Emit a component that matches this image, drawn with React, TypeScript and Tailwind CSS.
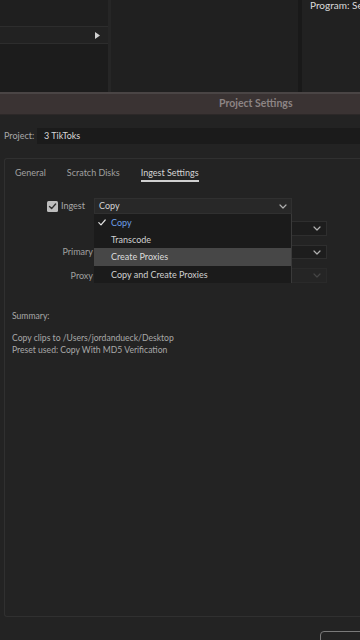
import React from "react";

function Chevron({ color = "#b0b0b0" }: { color?: string }) {
  return (
    <svg width="8" height="5" viewBox="0 0 8 5" fill="none">
      <path d="M1 1 L4 4 L7 1" stroke={color} strokeWidth="1.2" strokeLinecap="round" strokeLinejoin="round" />
    </svg>
  );
}

export default function App() {
  return (
    <div className="w-[360px] h-[640px] overflow-hidden bg-[#1f1f1f] flex flex-col font-['Lato',sans-serif] relative">
      {/* Top workspace panels */}
      <div className="h-[92px] flex shrink-0">
        <div className="w-[108px] flex flex-col">
          <div className="h-[26px] bg-[#1f1f1f]" />
          <div className="h-[18px] border-t border-b border-[#2d2d2d] bg-[#222222] flex items-center justify-end pr-[8px]">
            <svg width="5" height="7" viewBox="0 0 5 7">
              <path d="M0 0 L5 3.5 L0 7 Z" fill="#d0d0d0" />
            </svg>
          </div>
          <div className="flex-1 bg-[#1c1c1c]" />
        </div>
        <div className="w-[3px] bg-[#262626]" />
        <div className="flex-1 bg-[#202020]" />
        <div className="w-[4px] bg-[#191919]" />
        <div className="w-[58px] bg-[#212121] pl-[8px] text-[10px] leading-[11px] text-[#dcdcdc] whitespace-nowrap overflow-hidden">
          Program: Sequence 01
        </div>
      </div>
      <div className="h-[2px] bg-[#4a4545] shrink-0" />
      {/* Title bar */}
      <div className="h-[21px] bg-[#3a3333] shrink-0 flex items-center pl-[219px] text-[10.5px] font-bold text-[#8c8484] whitespace-nowrap border-b border-[#2c2828]">
        Project Settings
      </div>
      {/* Body */}
      <div className="flex-1 bg-[#232323] flex flex-col">
        <div className="flex items-center mt-[13px] h-[16px]">
          <div className="pl-[4px] w-[37px] text-[9px] text-[#a8a8a8]">Project:</div>
          <div className="flex-1 h-[16px] bg-[#1b1b1b] flex items-center pl-[7px] text-[9px] text-[#d8d8d8]">3 TikToks</div>
        </div>

        {/* Tab panel */}
        <div className="mt-[14px] ml-[4px] h-[459px] border border-r-0 border-[#303030] rounded-l-[3px] flex flex-col">
          <div className="flex gap-[21px] pl-[10px] pt-[8px] text-[9px] leading-[12px]">
            <span className="text-[#a0a0a0]">General</span>
            <span className="text-[#a0a0a0]">Scratch Disks</span>
            <span className="text-[#d4d4d4] border-b-2 border-[#d0d0d0] pb-[1px]">Ingest Settings</span>
          </div>

          {/* Form */}
          <div className="flex flex-col mt-[16px] text-[9px]">
            {/* Row 1 */}
            <div className="flex items-center h-[16px]">
              <div className="w-[89px] flex items-center justify-end gap-[3px] pr-[9px]">
                <svg width="11" height="11" viewBox="0 0 11 11">
                  <rect x="0" y="0" width="11" height="11" rx="1.5" fill="#bdbdbd" />
                  <path d="M2.5 5.5 L4.6 7.6 L8.6 3" stroke="#2e2e2e" strokeWidth="1.4" fill="none" strokeLinecap="round" strokeLinejoin="round" />
                </svg>
                <span className="text-[#a8a8a8]">Ingest</span>
              </div>
              <div className="relative w-[198px] h-[16px] bg-[#282828] border border-[#303030] flex items-center justify-between pl-[4px] pr-[4px] text-[#d4d4d4]">
                <span>Copy</span>
                <Chevron />
                {/* Dropdown menu */}
                <div className="absolute left-[-1px] top-[15px] w-[198px] h-[69px] bg-[#1b1b1b] border-r border-[#3a3a3a] flex flex-col z-10">
                  <div className="h-[17px] flex items-center pl-[17px] relative text-[#6e9fe6]">
                    <svg className="absolute left-[4px] top-[5px]" width="8" height="7" viewBox="0 0 8 7">
                      <path d="M0.8 3.6 L3 5.8 L7.2 1" stroke="#e0e0e0" strokeWidth="1.2" fill="none" strokeLinecap="round" strokeLinejoin="round" />
                    </svg>
                    Copy
                  </div>
                  <div className="h-[17px] flex items-center pl-[17px] text-[#d0d0d0]">Transcode</div>
                  <div className="h-[18px] flex items-center pl-[17px] text-[#dcdcdc] bg-[#474747]">Create Proxies</div>
                  <div className="h-[17px] flex items-center pl-[17px] text-[#d0d0d0]">Copy and Create Proxies</div>
                </div>
              </div>
            </div>
            {/* Row 2 */}
            <div className="flex items-center h-[15px] mt-[7px]">
              <div className="w-[89px]" />
              <div className="w-[233px] h-[15px] bg-[#1d1d1d] border border-[#2e2e2e] flex items-center justify-end pr-[5px]">
                <Chevron />
              </div>
            </div>
            {/* Row 3 */}
            <div className="flex items-center h-[14px] mt-[9px]">
              <div className="w-[89px] text-right pr-[1px] text-[#a0a0a0]">Primary</div>
              <div className="w-[233px] h-[14px] bg-[#1d1d1d] border border-[#2e2e2e] flex items-center justify-end pr-[5px]">
                <Chevron />
              </div>
            </div>
            {/* Row 4 */}
            <div className="flex items-center h-[15px] mt-[9px]">
              <div className="w-[89px] text-right pr-[1px] text-[#a0a0a0]">Proxy</div>
              <div className="w-[233px] h-[15px] bg-[#252525] border border-[#2a2a2a] flex items-center justify-end pr-[5px]">
                <Chevron color="#454545" />
              </div>
            </div>
          </div>

          {/* Summary */}
          <div className="pl-[7px] mt-[27px] text-[8.6px] leading-[12px] text-[#a8a8a8]">
            <div>Summary:</div>
            <div className="mt-[10px]">Copy clips to /Users/jordandueck/Desktop</div>
            <div>Preset used: Copy With MD5 Verification</div>
          </div>
        </div>

        {/* Bottom button edge */}
        <div className="mt-[14px] ml-[320px] w-[60px] h-[20px] border border-[#7a7a7a] rounded-[4px]" />
      </div>

      {/* Mouse cursor */}
      <svg className="absolute left-[175px] top-[257px]" width="11" height="16" viewBox="0 0 11 16">
        <path d="M0.5 0.5 L0.5 12.5 L3.5 9.8 L5.6 14.8 L7.6 14 L5.5 9.2 L9.6 9.2 Z" fill="#ffffff" stroke="#000000" strokeWidth="1" strokeLinejoin="round" />
      </svg>
    </div>
  );
}
